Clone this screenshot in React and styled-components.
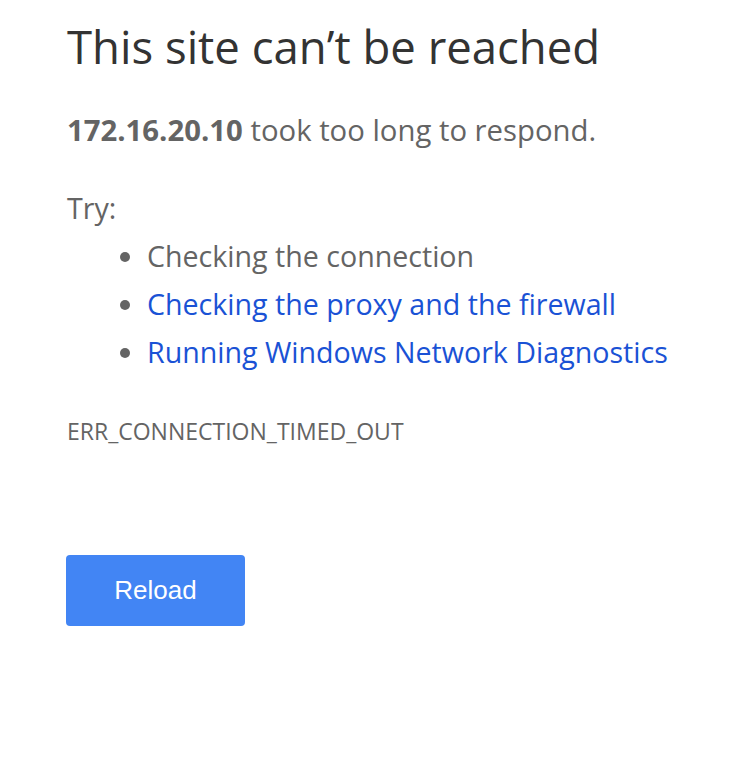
import styled, { createGlobalStyle } from "styled-components";

const GlobalStyle = createGlobalStyle`
  html, body {
    margin: 0;
    padding: 0;
    background: #fff;
  }
  body {
    font-family: "Open Sans", "Noto Sans", sans-serif;
  }
`;

const Page = styled.div`
  padding: 14px 0 0 67px;
  color: #646464;
`;

const Title = styled.h1`
  margin: 0;
  font-size: 45.5px;
  font-weight: 400;
  line-height: 64px;
  color: #333;
`;

const Summary = styled.p`
  margin: 34px 0 0;
  font-size: 29.3px;
  line-height: 36px;
  strong {
    font-weight: 700;
  }
`;

const Suggestions = styled.div`
  margin-top: 36px;
  font-size: 28.6px;
  line-height: 48px;
`;

const List = styled.ul`
  margin: 0;
  padding-left: 80px;
`;

const Item = styled.li`
  color: ${(p) => (p.$link ? "#1a52d5" : "#646464")};
  &::marker {
    color: #646464;
  }
`;

const ErrorCode = styled.div`
  margin-top: 41px;
  font-size: 23px;
  line-height: 28px;
  text-transform: uppercase;
`;

const ReloadButton = styled.button`
  display: block;
  margin: 110px 0 0 -1px;
  width: 179px;
  height: 71px;
  border: none;
  border-radius: 4px;
  background: #4285f4;
  color: #fff;
  font-family: "Liberation Sans", Arial, sans-serif;
  font-size: 26px;
  cursor: pointer;
`;

export default function App() {
  return (
    <>
      <GlobalStyle />
      <Page>
        <Title>This site can’t be reached</Title>
        <Summary>
          <strong>172.16.20.10</strong> took too long to respond.
        </Summary>
        <Suggestions>
          Try:
          <List>
            <Item>Checking the connection</Item>
            <Item $link>Checking the proxy and the firewall</Item>
            <Item $link>Running Windows Network Diagnostics</Item>
          </List>
        </Suggestions>
        <ErrorCode>ERR_CONNECTION_TIMED_OUT</ErrorCode>
        <ReloadButton>Reload</ReloadButton>
      </Page>
    </>
  );
}
